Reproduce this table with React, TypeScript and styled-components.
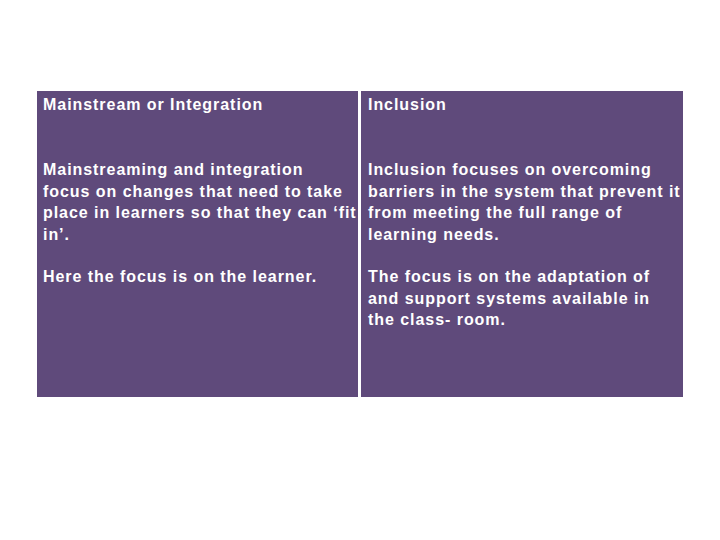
import React from 'react';
import styled, { createGlobalStyle } from 'styled-components';

const GlobalStyle = createGlobalStyle`
  html, body {
    margin: 0;
    padding: 0;
    background: #ffffff;
  }
  body {
    font-family: "Liberation Sans", Arial, sans-serif;
  }
`;

const Slide = styled.div`
  width: 720px;
  height: 540px;
  padding: 91px 0 0 37px;
  box-sizing: border-box;
`;

const Table = styled.div`
  display: grid;
  grid-template-columns: 321px 322px;
  grid-template-rows: 65px 107px 134px;
  column-gap: 3px;
  width: 646px;
`;

const Cell = styled.div<{ $right?: boolean }>`
  background: #5f4a7b;
  color: #ffffff;
  font-weight: bold;
  font-size: 16px;
  letter-spacing: 0.95px;
  line-height: 21.5px;
  padding: 3px 0 0 ${p => (p.$right ? '7px' : '6px')};
  box-sizing: border-box;
  overflow: hidden;
`;

const Line = styled.div`
  white-space: nowrap;
`;

const rows: [string[], string[]][] = [
  [['Mainstream or Integration'], ['Inclusion']],
  [
    [
      'Mainstreaming and integration',
      'focus on changes that need to take',
      'place in learners so that they can \u2018fit',
      'in\u2019.'
    ],
    [
      'Inclusion focuses on overcoming',
      'barriers in the system that prevent it',
      'from meeting the full range of',
      'learning needs.'
    ]
  ],
  [
    ['Here the focus is on the learner.'],
    [
      'The focus is on the adaptation of',
      'and support systems available in',
      'the class- room.'
    ]
  ]
];

const App: React.FC = () => (
  <>
    <GlobalStyle />
    <Slide>
      <Table>
        {rows.map(([left, right], i) => (
          <React.Fragment key={i}>
            <Cell>
              {left.map(l => (
                <Line key={l}>{l}</Line>
              ))}
            </Cell>
            <Cell $right>
              {right.map(l => (
                <Line key={l}>{l}</Line>
              ))}
            </Cell>
          </React.Fragment>
        ))}
      </Table>
    </Slide>
  </>
);

export default App;
